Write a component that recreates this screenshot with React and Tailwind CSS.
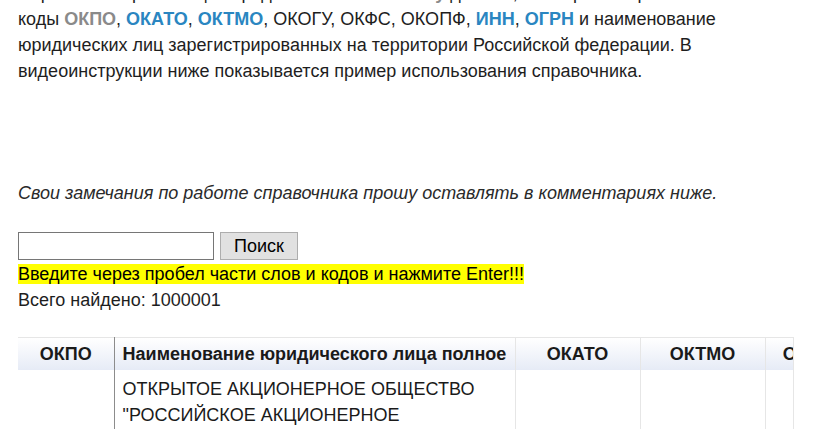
export default function App() {
  const blue = "font-bold text-[#2a86c1]";
  const cols = [
    { label: "ОКПО", w: "w-[96px]", border: "border-r-[#8c8c8c]" },
    { label: "Наименование юридического лица полное", w: "w-[401px]", border: "border-r-[#e6e6e6]" },
    { label: "ОКАТО", w: "w-[125px]", border: "border-r-[#e6e6e6]" },
    { label: "ОКТМО", w: "w-[125px]", border: "border-r-[#e6e6e6]" },
    { label: "ОКОГУ", w: "w-[96px]", border: "border-r-[#e6e6e6]" },
  ];

  return (
    <div className="h-[429px] w-[819px] overflow-hidden bg-white font-['Liberation_Sans',Arial,sans-serif] text-[18px] leading-[26px] text-[#1e1e1e]">
      <div className="ml-[18px] w-[776px]">
        {/* Description */}
        <p className="-mt-[20px]">
          <span className="whitespace-nowrap">
            Справочник организаций представляет собой <b className="text-[#8a8a8a]">базу</b> данных, в
            которой собраны
          </span>
          <br />
          коды <b className="text-[#8a8a8a]">ОКПО</b>, <b className={blue}>ОКАТО</b>,{" "}
          <b className={blue}>ОКТМО</b>, ОКОГУ, ОКФС, ОКОПФ, <b className={blue}>ИНН</b>,{" "}
          <b className={blue}>ОГРН</b> и наименование юридических лиц зарегистрированных на
          территории Российской федерации. В видеоинструкции ниже показывается пример
          использования справочника.
        </p>

        <p className="mt-[96px] italic text-[#2a2a2a]">
          Свои замечания по работе справочника прошу оставлять в комментариях ниже.
        </p>

        {/* Search form */}
        <div className="mt-[26px] flex items-center gap-[6px]">
          <input
            type="text"
            className="h-[28px] w-[196px] border border-[#767676] bg-white px-1 outline-none"
          />
          <button className="h-[28px] w-[78px] border border-[#adadad] bg-[#e1e1e1] text-[18px] leading-none text-black">
            Поиск
          </button>
        </div>
        <div className="mt-px">
          <span className="bg-[#ffff00] text-black">
            Введите через пробел части слов и кодов и нажмите Enter!!!
          </span>
        </div>
        <div>Всего найдено: 1000001</div>

        {/* Results table */}
        <div className="mt-[24px] w-[776px] overflow-hidden border-r border-[#e6e6e6]">
          <table className="w-[843px] table-fixed border-collapse">
            <thead>
              <tr className="h-[32px] bg-gradient-to-b from-white to-[#e6ebf6]">
                {cols.map((c) => (
                  <th
                    key={c.label}
                    className={`${c.w} border-t border-r border-t-[#e6e6e6] ${c.border} px-1 text-center font-bold text-[#1a1a1a] whitespace-nowrap`}
                  >
                    {c.label}
                  </th>
                ))}
              </tr>
            </thead>
            <tbody>
              <tr className="align-top">
                <td className="border-r border-r-[#8c8c8c]"></td>
                <td className="border-r border-r-[#e6e6e6] px-2 pt-[6px] text-[#1a1a1a]">
                  ОТКРЫТОЕ АКЦИОНЕРНОЕ ОБЩЕСТВО "РОССИЙСКОЕ АКЦИОНЕРНОЕ ОБЩЕСТВО ЭНЕРГЕТИКИ И
                  ЭЛЕКТРИФИКАЦИИ "ЕЭС РОССИИ"
                </td>
                <td className="border-r border-r-[#e6e6e6]"></td>
                <td className="border-r border-r-[#e6e6e6]"></td>
                <td className="border-r border-r-[#e6e6e6]"></td>
              </tr>
            </tbody>
          </table>
        </div>
      </div>
    </div>
  );
}
